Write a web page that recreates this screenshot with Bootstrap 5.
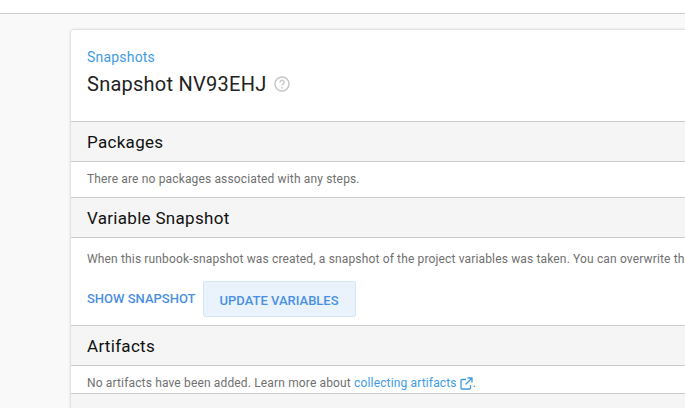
<!DOCTYPE html>
<html><head><meta charset="utf-8">
<link href="https://cdn.jsdelivr.net/npm/bootstrap@5.3.0/dist/css/bootstrap.min.css" rel="stylesheet">
<style>
html,body{height:408px;overflow:hidden}
body{background:#f9f9f9;font-family:Roboto,sans-serif;color:#111}
.topstrip{height:14px;background:#fff;border-bottom:1px solid #ccc}
.panel{margin:16px 0 0 71px;width:700px;background:#fff;border-radius:3px 0 0 0;box-shadow:0 0 3px rgba(0,0,0,.25)}
.panel-head{height:91px;padding:19px 16px 0}
.crumb{display:block;font-size:14px;line-height:16px;color:#3d9be6;letter-spacing:.2px;text-decoration:none}
.title-line{margin:7px 0 0;font-size:20px;font-weight:400;line-height:24px;color:#222;letter-spacing:.25px}
.sec-title{height:41px;margin:0;padding:0 16px;background:#f5f5f5;border-top:1px solid #ccc;border-bottom:1px solid #ccc;font-size:17px;font-weight:400;line-height:41px;letter-spacing:.3px;color:#111}
.sec-body{font-size:12px;line-height:16px;color:#707070;padding:9px 16px 0;letter-spacing:.15px;white-space:nowrap}
.b1{height:35px}.b2{height:87px;padding-top:13px}.b3{height:27px}
.ext{color:#3d9be6;text-decoration:none}
.act-row{margin-top:14px;height:36px}
.act{font-size:13px;font-weight:500;color:#4a90e2;text-transform:uppercase;letter-spacing:0;padding:0;border:0;border-radius:2px;background:transparent;text-decoration:none}
.act-fill{background:#eaf3fb;border:1px solid #d4e6f7;height:36px;padding:0 16px;line-height:37px;margin-left:7px}
</style></head><body>
<div class="topstrip"></div>
<div class="panel">
<div class="panel-head">
<a class="crumb" href="#">Snapshots</a>
<h1 class="title-line d-flex align-items-center">Snapshot NV93EHJ
<svg class="ms-2" width="16" height="16" viewBox="0 0 16 16" fill="none"><circle cx="8" cy="8" r="7" stroke="#c4c4c4" stroke-width="1.4"/><path d="M5.9 6.3a2.1 2.1 0 1 1 3.3 1.7c-.8.5-1.2.9-1.2 1.8" stroke="#c4c4c4" stroke-width="1.3"/><circle cx="8" cy="11.8" r=".9" fill="#c4c4c4"/></svg></h1>
</div>
<h2 class="sec-title">Packages</h2>
<div class="sec-body b1">There are no packages associated with any steps.</div>
<h2 class="sec-title">Variable Snapshot</h2>
<div class="sec-body b2">When this runbook-snapshot was created, a snapshot of the project variables was taken. You can overwrite the variable snapshot by re-importing the variables from the project.
<div class="act-row d-flex align-items-center"><a class="act" href="#">Show Snapshot</a><a class="act act-fill" href="#">Update Variables</a></div></div>
<h2 class="sec-title">Artifacts</h2>
<div class="sec-body b3">No artifacts have been added. Learn more about <a class="ext" href="#">collecting artifacts <svg width="13" height="13" viewBox="0 0 13 13" fill="none" stroke="currentColor" stroke-width="1.3"><path d="M6 2.5H2a1 1 0 0 0-1 1V11a1 1 0 0 0 1 1h7.5a1 1 0 0 0 1-1V8"/><path d="M5.5 7.5 11.5 1.5M7.5 1h4.5v4.5"/></svg></a>.</div>
<h2 class="sec-title">Machines</h2>
</div>
</body></html>
